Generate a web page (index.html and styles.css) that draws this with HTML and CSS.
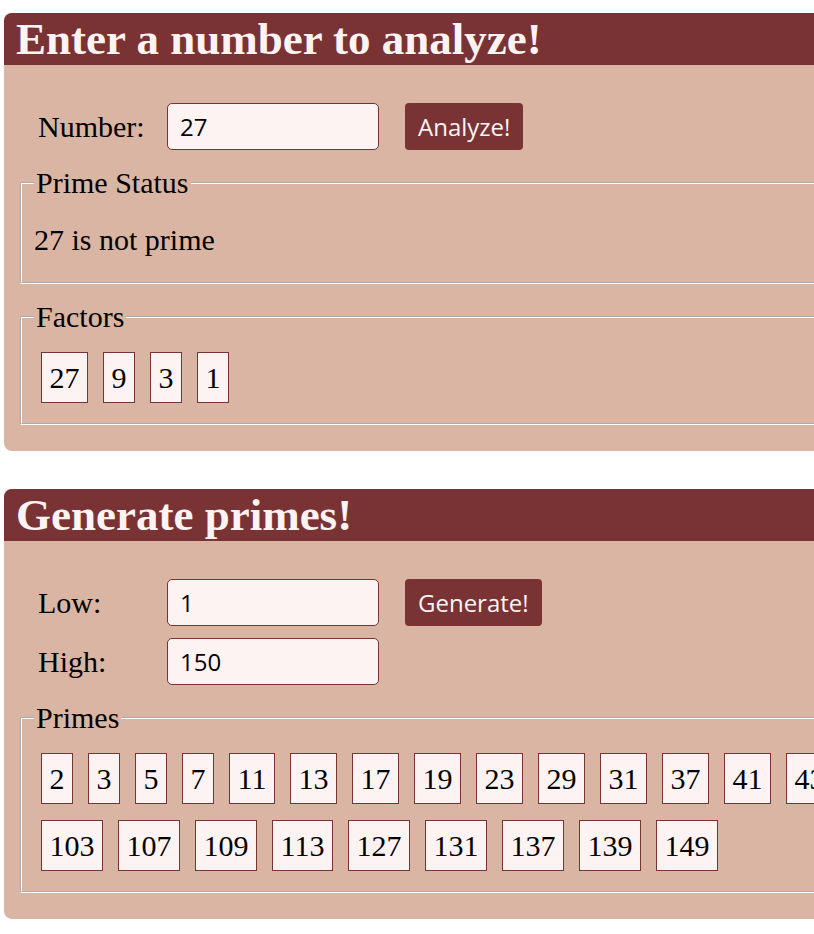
FILE: index.html
```html
<!DOCTYPE html>
<html lang="en">
<head>
<meta charset="utf-8">
<title>Prime Tools</title>
<link rel="stylesheet" href="styles.css">
</head>
<body>
<div class="page">
  <section class="panel">
    <h1 class="panel-title">Enter a number to analyze!</h1>
    <div class="panel-body">
      <div class="form-row">
        <label class="field-label" for="num">Number:</label>
        <input class="text-input" id="num" type="text" value="27">
        <button class="btn" type="button">Analyze!</button>
      </div>
      <fieldset class="group">
        <legend class="group-legend">Prime Status</legend>
        <p class="status">27 is not prime</p>
      </fieldset>
      <fieldset class="group">
        <legend class="group-legend">Factors</legend>
        <div class="chips">
          <span class="chip">27</span><span class="chip">9</span><span class="chip">3</span><span class="chip">1</span>
        </div>
      </fieldset>
    </div>
  </section>

  <section class="panel">
    <h1 class="panel-title">Generate primes!</h1>
    <div class="panel-body">
      <div class="form-row">
        <label class="field-label" for="low">Low:</label>
        <input class="text-input" id="low" type="text" value="1">
        <button class="btn" type="button">Generate!</button>
      </div>
      <div class="form-row form-row-tight">
        <label class="field-label" for="high">High:</label>
        <input class="text-input" id="high" type="text" value="150">
      </div>
      <fieldset class="group">
        <legend class="group-legend">Primes</legend>
        <div class="chips">
          <span class="chip">2</span><span class="chip">3</span><span class="chip">5</span><span class="chip">7</span><span class="chip">11</span><span class="chip">13</span><span class="chip">17</span><span class="chip">19</span><span class="chip">23</span><span class="chip">29</span><span class="chip">31</span><span class="chip">37</span><span class="chip">41</span><span class="chip">43</span><span class="chip">47</span><span class="chip">53</span><span class="chip">59</span><span class="chip">61</span><span class="chip">67</span><span class="chip">71</span><span class="chip">73</span><span class="chip">79</span><span class="chip">83</span><span class="chip">89</span><span class="chip">97</span><span class="chip">101</span><span class="chip">103</span><span class="chip">107</span><span class="chip">109</span><span class="chip">113</span><span class="chip">127</span><span class="chip">131</span><span class="chip">137</span><span class="chip">139</span><span class="chip">149</span>
        </div>
      </fieldset>
    </div>
  </section>
</div>
</body>
</html>
```
FILE: styles.css
```css
html, body {
  margin: 0;
  padding: 0;
  background: #ffffff;
}

body {
  font-family: "Liberation Serif", "Times New Roman", serif;
  font-size: 30px;
  color: #000000;
}

.page {
  display: flex;
  flex-direction: column;
  gap: 38px;
  padding: 13px 4px 20px;
  width: 1660px;
}

.panel {
  background: #dab5a3;
  border-radius: 8px;
  overflow: hidden;
}

.panel-title {
  margin: 0;
  padding: 0 12px;
  background: #7a3334;
  color: #fdf3f3;
  font-family: "Liberation Serif", "Times New Roman", serif;
  font-weight: bold;
  font-size: 45px;
  line-height: 52px;
}

.panel-body {
  padding: 38px 16px 26px;
}

.form-row {
  display: flex;
  align-items: center;
  padding-left: 18px;
}

.form-row-tight {
  margin-top: 12px;
}

.field-label {
  width: 129px;
  flex: none;
  font-size: 30px;
}

.text-input {
  box-sizing: border-box;
  width: 212px;
  height: 47px;
  padding: 0 12px;
  border: 1px solid #7a3334;
  border-radius: 5px;
  background: #fdf3f3;
  color: #000000;
  font-family: "Open Sans", "Noto Sans", sans-serif;
  font-size: 24px;
}

.btn {
  box-sizing: border-box;
  height: 47px;
  margin-left: 26px;
  padding: 0 13px;
  border: none;
  border-radius: 4px;
  background: #7a3334;
  color: #fdf3f3;
  font-family: "Open Sans", "Noto Sans", sans-serif;
  font-size: 24px;
}

.group {
  margin: 16px 0 0;
  padding: 6px 12px 10px;
  border: 2px groove #ffffff;
}

.group-legend {
  padding: 0 2px;
  font-size: 30px;
}

.status {
  margin: 17px 0 15px;
  font-size: 30px;
}

.chips {
  display: flex;
  flex-wrap: wrap;
  gap: 16px 15px;
  margin: 12px 0 10px;
  padding-left: 7px;
}

.chip {
  box-sizing: border-box;
  padding: 7px 7.5px;
  border: 1px solid #7a3334;
  background: #fdf3f3;
  font-size: 30px;
  line-height: 35px;
}
```
